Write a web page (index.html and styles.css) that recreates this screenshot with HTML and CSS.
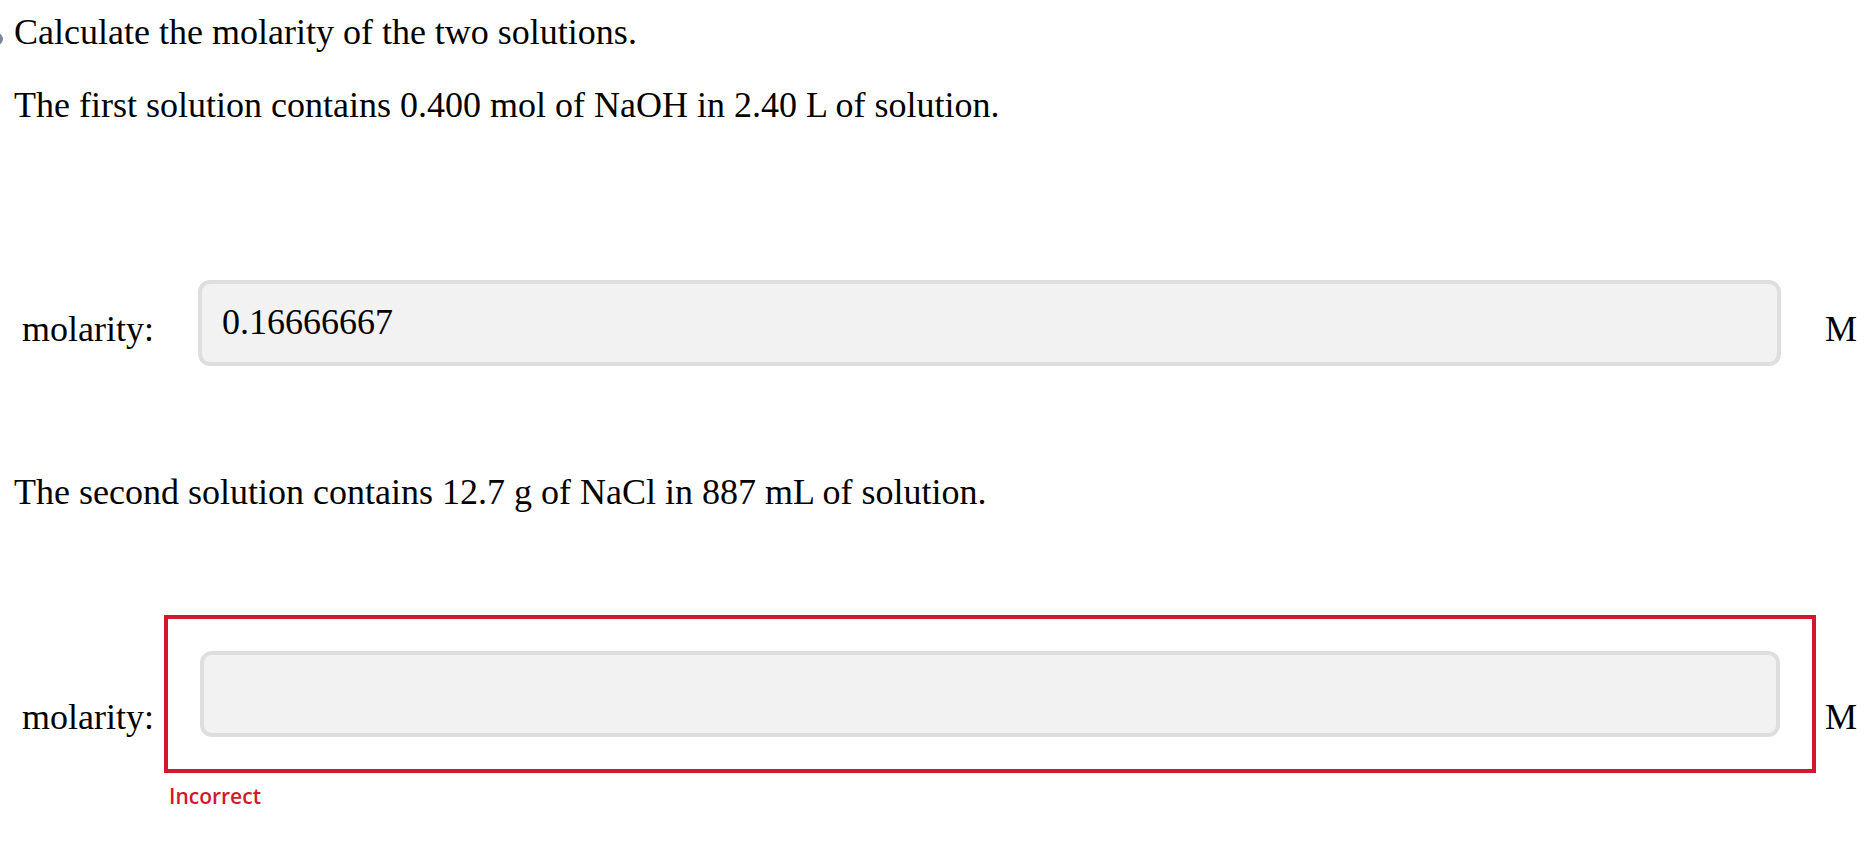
FILE: index.html
```html
<!DOCTYPE html>
<html lang="en">
<head>
  <meta charset="UTF-8">
  <title>Molarity</title>
  <meta name="viewport" content="width=device-width, initial-scale=1.0">
  <link rel="stylesheet" href="styles.css">
</head>
<body>
  <div class="pregunta">
    <div class="titulo">
      <span class="marca"></span>
      <span>Calculate the molarity of the two solutions.</span>
    </div>
    <p class="texto texto-1">The first solution contains 0.400 mol of NaOH in 2.40 L of solution.</p>

    <div class="fila fila-1">
      <div class="etiqueta">molarity:</div>
      <div class="campo">
        <div class="entrada">0.16666667</div>
      </div>
      <div class="unidad">M</div>
    </div>

    <p class="texto texto-2">The second solution contains 12.7 g of NaCl in 887 mL of solution.</p>

    <div class="fila fila-2">
      <div class="etiqueta">molarity:</div>
      <div class="campo">
        <div class="caja-error">
          <div class="entrada"></div>
        </div>
        <div class="aviso">Incorrect</div>
      </div>
      <div class="unidad">M</div>
    </div>
  </div>
</body>
</html>
```

FILE: styles.css
```css
body {
  margin: 0;
  font-family: "Liberation Serif", "Times New Roman", serif;
  font-size: 36px;
  color: #000;
  background: #fff;
}
.pregunta {
  padding-top: 12px;
}
.titulo {
  display: flex;
  align-items: flex-start;
  line-height: 41px;
}
.marca {
  width: 12px;
  height: 12px;
  margin: 21px 11px 0 -9px;
  border-radius: 50%;
  background: #7b8794;
  flex: none;
}
.texto {
  margin: 0;
  padding-left: 14px;
  line-height: 41px;
}
.texto-1 {
  margin-top: 32px;
}
.texto-2 {
  margin-top: 94px;
}
.fila {
  display: flex;
  align-items: center;
  line-height: 41px;
}
.fila-1 {
  margin-top: 154px;
}
.fila-2 {
  margin-top: 102px;
}
.etiqueta {
  width: 164px;
  padding-left: 22px;
  box-sizing: border-box;
  flex: none;
}
.campo {
  flex: 1;
}
.fila-1 .entrada {
  margin: 0 35px 12px 34px;
}
.entrada {
  height: 86px;
  box-sizing: border-box;
  border: 4px solid #dedede;
  border-radius: 12px;
  background: #f2f2f2;
  padding: 18px 20px 0;
  line-height: 41px;
}
.caja-error {
  border: 4px solid #d0192b;
  padding: 32px;
}
.aviso {
  margin: 9px 0 8px 5px;
  font-family: "Open Sans", "Noto Sans", sans-serif;
  font-weight: 600;
  font-size: 21px;
  line-height: 29px;
  color: #d0192b;
}
.unidad {
  width: 52px;
  padding-left: 9px;
  box-sizing: border-box;
  flex: none;
}
```
